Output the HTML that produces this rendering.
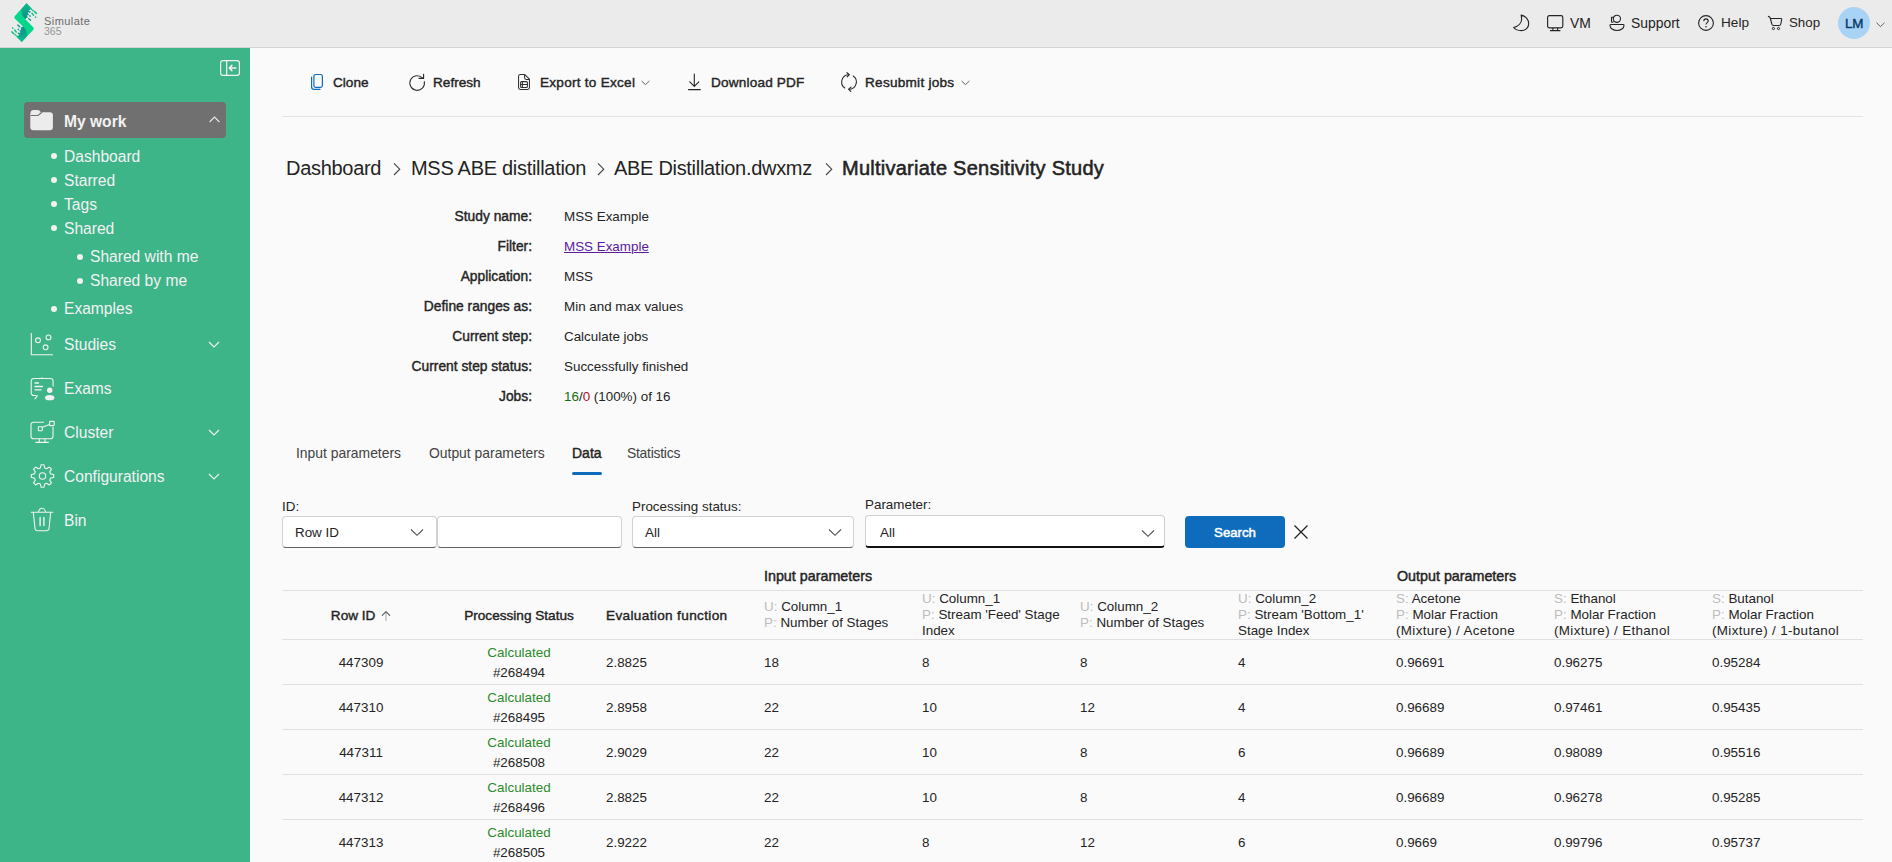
<!DOCTYPE html>
<html><head><meta charset="utf-8">
<style>
*{box-sizing:border-box;margin:0;padding:0}
html,body{width:1892px;height:862px;overflow:hidden;background:#fafafa;font-family:"Liberation Sans",sans-serif;color:#242424}
.a{position:absolute;white-space:nowrap}
svg{position:absolute;overflow:visible}
#hdr{position:absolute;left:0;top:0;width:1892px;height:48px;background:#ebebeb;border-bottom:1px solid #d4d4d4}
#side{position:absolute;left:0;top:48px;width:250px;height:814px;background:#3eb489;color:#f2f2f2}
.ht{font-size:13.4px;line-height:20px;color:#242424}
.nav{font-size:15.6px;line-height:24px;color:#f2f2f2}
.dot{position:absolute;width:6px;height:6px;border-radius:3px;background:#f2f2f2}
.tb{font-size:13.6px;line-height:20px;color:#242424;-webkit-text-stroke:0.4px #242424;margin-top:1px}
.bc{font-size:20px;line-height:28px;color:#242424;letter-spacing:-0.3px}
.lbl{left:332px;width:200px;text-align:right;font-size:13.8px;line-height:20px;color:#242424;-webkit-text-stroke:0.4px #242424}
.val{left:564px;font-size:13.4px;line-height:20px;color:#242424}
.tab{font-size:13.9px;line-height:20px;color:#424242}
.flb{font-size:13.4px;line-height:20px;color:#242424}
.dd{height:32px;background:#fff;border:1px solid #d1d1d1;border-bottom:1px solid #616161;border-radius:4px}
.ddt{font-size:13.4px;line-height:20px;color:#242424}
.gh{font-size:14.3px;line-height:20px;color:#242424;-webkit-text-stroke:0.45px #242424}
.th{font-size:13.6px;line-height:20px;color:#242424;-webkit-text-stroke:0.4px #242424}
.ph{font-size:13.4px;line-height:16px;color:#242424}
.ph i{font-style:normal;color:#bdbdbd}
.td{font-size:13.4px;line-height:20px;color:#242424}
</style></head><body>

<!-- HEADER -->
<div id="hdr"></div>
<svg style="left:0px;top:0px" width="48" height="46" viewBox="0 0 48 46">
  <defs>
    <linearGradient id="lg1" x1="0.2" y1="0" x2="0.3" y2="1"><stop offset="0" stop-color="#0fbf8c"/><stop offset="1" stop-color="#0a8c8a"/></linearGradient>
  </defs>
  <g id="half">
    <path d="M26.5 3 L21 9.3 C20.5 12 21 15.5 23 17.5 L25 19.3 L27 17.5 L28.5 11 L31.5 8.3 Z" fill="url(#lg1)"/>
    <g stroke="#0e9e8a" stroke-width="1.5" stroke-linecap="round">
      <path d="M26.6 10.6 L30 12"/>
      <path d="M25.4 13.6 L28.2 14.4"/>
      <path d="M25.8 16.4 L27 17.3 M28.7 18.7 L30.5 20.3"/>
      <path d="M29.8 15.8 L30.1 16.1"/>
    </g>
    <g stroke="#0cc48c" stroke-width="1.5" stroke-linecap="round">
      <path d="M29.5 7.5 L31.5 9.3"/>
      <path d="M32.6 10.3 L33.2 10.7 M34.6 11.6 L36.4 13.4"/>
      <path d="M32 13.3 L33.6 15.2 M35.5 17.1 L35.7 17.3"/>
    </g>
  </g>
  <use href="#half" transform="rotate(180 24.15 22.65)"/>
  <path d="M21.2 9.1 L14.9 16 Q13.6 17.4 14.9 18.7 L23.6 26.9 C25.8 29 27.3 32.5 27.1 36.2 L33.2 29.9 Q34.4 28.6 33.2 27.3 L24.7 18.4 C22.5 16.3 21 13 21.2 9.1 Z" fill="#05d68a"/>
</svg>
<div class="a" style="left:44px;top:14px;font-size:11px;line-height:14px;color:#6a6a6a;letter-spacing:0.45px">Simulate</div>
<div class="a" style="left:44px;top:25px;font-size:10.5px;line-height:12px;color:#969696">365</div>

<!-- header right -->
<svg style="left:1513px;top:14px" width="17" height="18" viewBox="0 0 17 18"><path d="M8.2 1.1 C12.6 2 15.7 5.6 15.7 9.8 C15.7 13.6 12.5 16.6 8.4 16.6 C5 16.6 2.2 15.4 0.7 13.5 C5.5 12 8.8 8.5 8.6 5 C8.5 3.5 8.4 2.2 8.2 1.1 Z" fill="none" stroke="#242424" stroke-width="1.15" stroke-linejoin="round"/></svg>
<svg style="left:1547px;top:15px" width="17" height="17" viewBox="0 0 17 17"><rect x="0.6" y="0.6" width="15.2" height="12.2" rx="1.8" fill="none" stroke="#242424" stroke-width="1.15"/><path d="M5.9 12.8 V15.3 M10.6 12.8 V15.3 M3 15.6 H13.4" stroke="#242424" stroke-width="1.1"/></svg>
<div class="a ht" style="left:1570px;top:13px;font-size:13.9px">VM</div>
<svg style="left:1609px;top:15px" width="16" height="17" viewBox="0 0 16 17"><circle cx="7.9" cy="3.8" r="3.6" fill="none" stroke="#242424" stroke-width="1.1"/><path d="M4.4 2.3 H2.5 V6.6 C2.5 7.3 3.1 7.5 3.7 7.1 L4.6 6.5" fill="none" stroke="#242424" stroke-width="1.1" stroke-linejoin="round"/><path d="M1.7 9.5 H14.3 C14.8 9.5 15 9.9 15 10.4 C15 13.3 11.8 15.5 8 15.5 C4.2 15.5 1 13.3 1 10.4 C1 9.9 1.2 9.5 1.7 9.5 Z" fill="none" stroke="#242424" stroke-width="1.1"/></svg>
<div class="a ht" style="left:1631px;top:13px;font-size:13.9px">Support</div>
<svg style="left:1698px;top:15px" width="17" height="17" viewBox="0 0 17 17"><circle cx="8" cy="8" r="7.4" fill="none" stroke="#242424" stroke-width="1.1"/><path d="M5.8 6.2 C5.8 4.8 6.8 3.9 8 3.9 C9.2 3.9 10.2 4.8 10.2 6 C10.2 7.5 8 7.7 8 9.6" fill="none" stroke="#242424" stroke-width="1.1"/><circle cx="8" cy="11.8" r="0.8" fill="#242424"/></svg>
<div class="a ht" style="left:1721px;top:13px;font-size:13.6px">Help</div>
<svg style="left:1768px;top:15px" width="16" height="17" viewBox="0 0 16 17"><path d="M0.4 1.4 C1.2 1.4 2 1.9 2.4 3.5" fill="none" stroke="#242424" stroke-width="1.1" stroke-linecap="round"/><path d="M2.4 3.5 H13 C13.5 3.5 13.8 3.9 13.7 4.4 L12.8 9 C12.6 9.9 12 10.5 11.1 10.5 H5.5 C4.6 10.5 4 9.9 3.8 9 Z" fill="none" stroke="#242424" stroke-width="1.1" stroke-linejoin="round"/><circle cx="5.4" cy="13.5" r="1.1" fill="none" stroke="#242424" stroke-width="1"/><circle cx="10.5" cy="13.5" r="1.1" fill="none" stroke="#242424" stroke-width="1"/></svg>
<div class="a ht" style="left:1789px;top:13px;font-size:13.3px">Shop</div>
<div class="a" style="left:1838px;top:7px;width:32px;height:32px;border-radius:16px;background:#a9d3f5"></div>
<div class="a" style="left:1838px;top:14px;width:32px;text-align:center;font-size:13.4px;line-height:20px;color:#0c3b6e;-webkit-text-stroke:0.45px #0c3b6e;letter-spacing:-0.3px">LM</div>
<svg style="left:1876px;top:22px" width="9" height="6" viewBox="0 0 9 6"><path d="M0.5 0.8 L4.5 4.6 L8.5 0.8" fill="none" stroke="#616161" stroke-width="1"/></svg>

<!-- SIDEBAR -->
<div id="side"></div>
<svg style="left:220px;top:60px" width="21" height="17" viewBox="0 0 21 17"><rect x="0.6" y="0.6" width="18.8" height="14.8" rx="2.4" fill="none" stroke="#f2f2f2" stroke-width="1.2"/><path d="M6.7 0.8 V15.2" stroke="#f2f2f2" stroke-width="1.2"/><path d="M15.8 8 H9.6 M11.9 5.4 L9.3 8 L11.9 10.6" fill="none" stroke="#f2f2f2" stroke-width="1.5" stroke-linecap="round" stroke-linejoin="round"/></svg>
<div class="a" style="left:24px;top:102px;width:202px;height:36px;border-radius:4px;background:#707070"></div>
<svg style="left:30px;top:110px" width="24" height="21" viewBox="0 0 24 21"><path d="M0.5 3 C0.5 1.2 1.7 0 3.5 0 H7.5 C8.5 0 9.2 0.4 9.8 1 L11 2.2 L3 5 H0.5 Z" fill="#ececec"/><rect x="0.3" y="2.3" width="22.6" height="18" rx="3" fill="#ececec"/><path d="M0.5 5.5 L8 5.5 L12 2.3" fill="none" stroke="#707070" stroke-width="1.1"/></svg>
<div class="a" style="left:64px;top:110px;font-size:15.6px;line-height:24px;font-weight:bold;color:#f2f2f2">My work</div>
<svg style="left:209px;top:116px" width="11" height="7" viewBox="0 0 11 7"><path d="M0.6 6 L5.5 1 L10.4 6" fill="none" stroke="#e8e8e8" stroke-width="1.1"/></svg>

<div class="dot" style="left:51px;top:153px"></div><div class="a nav" style="left:64px;top:145px">Dashboard</div>
<div class="dot" style="left:51px;top:177px"></div><div class="a nav" style="left:64px;top:169px">Starred</div>
<div class="dot" style="left:51px;top:201px"></div><div class="a nav" style="left:64px;top:193px">Tags</div>
<div class="dot" style="left:51px;top:225px"></div><div class="a nav" style="left:64px;top:217px">Shared</div>
<div class="dot" style="left:77px;top:254px"></div><div class="a nav" style="left:90px;top:245px">Shared with me</div>
<div class="dot" style="left:77px;top:278px"></div><div class="a nav" style="left:90px;top:269px">Shared by me</div>
<div class="dot" style="left:51px;top:306px"></div><div class="a nav" style="left:64px;top:297px">Examples</div>


<svg style="left:30px;top:332px" width="24" height="24" viewBox="0 0 24 24"><path d="M1.3 1 V22.7 H23" fill="none" stroke="#f2f2f2" stroke-width="1.1"/><circle cx="8" cy="8.3" r="2.4" fill="none" stroke="#f2f2f2" stroke-width="1.1"/><circle cx="18.5" cy="5.4" r="2.4" fill="none" stroke="#f2f2f2" stroke-width="1.1"/><circle cx="15.6" cy="15.3" r="2.4" fill="none" stroke="#f2f2f2" stroke-width="1.1"/></svg>
<svg style="left:208px;top:341px" width="12" height="7" viewBox="0 0 12 7"><path d="M1 1 L6 6 L11 1" fill="none" stroke="#f2f2f2" stroke-width="1.1"/></svg>
<svg style="left:30px;top:376px" width="26" height="26" viewBox="0 0 26 26"><path d="M6.5 19.5 H4 C2.3 19.5 1.2 18.4 1.2 16.7 V5.3 C1.2 3.6 2.3 2.5 4 2.5 H20.3 C22 2.5 23.1 3.6 23.1 5.3 V10.5" fill="none" stroke="#f2f2f2" stroke-width="1.1"/><path d="M7.3 19.8 L5 22.8" stroke="#f2f2f2" stroke-width="1.1" stroke-linecap="round"/><path d="M12 1.3 V2.5" stroke="#f2f2f2" stroke-width="1.1"/><path d="M5 7 H8.5 M5 10.5 H12.5 M5 13.8 H11" stroke="#f2f2f2" stroke-width="1.3" stroke-linecap="round"/><circle cx="19.7" cy="14.3" r="2.7" fill="#f2f2f2"/><ellipse cx="19.7" cy="21.7" rx="4.7" ry="2.6" fill="#f2f2f2"/></svg>
<svg style="left:30px;top:420px" width="26" height="24" viewBox="0 0 26 24"><path d="M14 2.3 H3.6 C2 2.3 1 3.3 1 4.9 V16.2 C1 17.8 2 18.8 3.6 18.8 H20.4 C22 18.8 23 17.8 23 16.2 V7" fill="none" stroke="#f2f2f2" stroke-width="1.1"/><path d="M9.3 18.8 V22 M14.9 18.8 V22 M5.3 22.4 H18.8" fill="none" stroke="#f2f2f2" stroke-width="1.1"/><rect x="8.3" y="6.8" width="4" height="4" rx="0.6" fill="none" stroke="#f2f2f2" stroke-width="1.1"/><rect x="19.6" y="1.4" width="4.6" height="4.2" rx="0.6" fill="none" stroke="#f2f2f2" stroke-width="1.1"/><path d="M12.3 7.3 L19.6 4.5" stroke="#f2f2f2" stroke-width="1.1"/></svg>
<svg style="left:208px;top:429px" width="12" height="7" viewBox="0 0 12 7"><path d="M1 1 L6 6 L11 1" fill="none" stroke="#f2f2f2" stroke-width="1.1"/></svg>
<svg style="left:30px;top:463px" width="25" height="26" viewBox="-12.5 -13 25 26"><path d="M-1.50 -11.20 L1.50 -11.20 L2.13 -8.02 L4.17 -7.18 L6.86 -8.98 L8.98 -6.86 L7.18 -4.17 L8.02 -2.13 L11.20 -1.50 L11.20 1.50 L8.02 2.13 L7.18 4.17 L8.98 6.86 L6.86 8.98 L4.17 7.18 L2.13 8.02 L1.50 11.20 L-1.50 11.20 L-2.13 8.02 L-4.17 7.18 L-6.86 8.98 L-8.98 6.86 L-7.18 4.17 L-8.02 2.13 L-11.20 1.50 L-11.20 -1.50 L-8.02 -2.13 L-7.18 -4.17 L-8.98 -6.86 L-6.86 -8.98 L-4.17 -7.18 L-2.13 -8.02 Z" fill="none" stroke="#f2f2f2" stroke-width="1.1" stroke-linejoin="round"/><circle cx="0" cy="0" r="3.2" fill="none" stroke="#f2f2f2" stroke-width="1.1"/></svg>
<svg style="left:208px;top:473px" width="12" height="7" viewBox="0 0 12 7"><path d="M1 1 L6 6 L11 1" fill="none" stroke="#f2f2f2" stroke-width="1.1"/></svg>
<svg style="left:30px;top:507px" width="25" height="25" viewBox="0 0 25 25"><path d="M1.3 5.2 H22.8" stroke="#f2f2f2" stroke-width="1.1" stroke-linecap="round"/><path d="M8.6 5 C8.6 2.9 10.3 1.3 12 1.3 C13.7 1.3 15.4 2.9 15.4 5" fill="none" stroke="#f2f2f2" stroke-width="1.1"/><path d="M3.3 5.3 L5 21.5 C5.2 23 6.3 23.8 7.6 23.8 H16.4 C17.7 23.8 18.8 23 19 21.5 L20.7 5.3" fill="none" stroke="#f2f2f2" stroke-width="1.1"/><path d="M10.1 10.5 V18.5 M13.9 10.5 V18.5" stroke="#f2f2f2" stroke-width="1.4" stroke-linecap="round"/></svg>
<div class="a nav" style="left:64px;top:333px">Studies</div>
<div class="a nav" style="left:64px;top:377px">Exams</div>
<div class="a nav" style="left:64px;top:421px">Cluster</div>
<div class="a nav" style="left:64px;top:465px">Configurations</div>
<div class="a nav" style="left:64px;top:509px">Bin</div>


<!-- TOOLBAR -->
<svg style="left:310px;top:73px" width="15" height="18" viewBox="0 0 15 18"><rect x="3.9" y="1.5" width="8.5" height="12.9" rx="1.8" fill="none" stroke="#0f6cbd" stroke-width="1.2"/><path d="M1.6 4 V14 C1.6 15.5 2.6 16.4 4 16.4 H10" fill="none" stroke="#0f6cbd" stroke-width="1.2" stroke-linecap="round"/></svg>
<div class="a tb" style="left:333px;top:72px">Clone</div>
<svg style="left:408px;top:73px" width="18" height="18" viewBox="0 0 18 18"><path d="M14.6 5.2 A7.3 7.3 0 1 0 16.3 8.6" fill="none" stroke="#303030" stroke-width="1.05" stroke-linecap="round"/><path d="M15.6 1.2 V5.4 H11" fill="none" stroke="#242424" stroke-width="1.1" stroke-linecap="round" stroke-linejoin="round"/></svg>
<div class="a tb" style="left:433px;top:72px">Refresh</div>
<svg style="left:517px;top:73px" width="15" height="18" viewBox="0 0 15 18"><path d="M3.4 1.55 H7.8 L12.45 6.2 V14.6 C12.45 15.7 11.7 16.45 10.6 16.45 H3.4 C2.3 16.45 1.55 15.7 1.55 14.6 V3.4 C1.55 2.3 2.3 1.55 3.4 1.55 Z" fill="none" stroke="#303030" stroke-width="1.05" stroke-linejoin="round"/><path d="M7.6 1.7 V4.8 C7.6 5.8 8.2 6.4 9.2 6.4 H12.3" fill="none" stroke="#303030" stroke-width="1.05"/><rect x="3.6" y="8.6" width="6.8" height="5.8" rx="1" fill="none" stroke="#303030" stroke-width="1.05"/><path d="M3.6 11.5 H10.4 M5.4 8.6 V14.4" stroke="#303030" stroke-width="1.05"/></svg>
<div class="a tb" style="left:540px;top:72px;letter-spacing:0.25px">Export to Excel</div>
<svg style="left:641px;top:80px" width="9" height="6" viewBox="0 0 9 6"><path d="M0.6 1 L4.5 4.6 L8.4 1" fill="none" stroke="#616161" stroke-width="1"/></svg>
<svg style="left:687px;top:73px" width="15" height="18" viewBox="0 0 15 18"><path d="M7.3 1 V13.3 M2.8 8.8 L7.3 13.3 L11.8 8.8" fill="none" stroke="#242424" stroke-width="1.1" stroke-linecap="round" stroke-linejoin="round"/><path d="M1.5 16.6 H13.3" stroke="#242424" stroke-width="1.2" stroke-linecap="round"/></svg>
<div class="a tb" style="left:711px;top:72px;letter-spacing:0.18px">Download PDF</div>
<svg style="left:840px;top:73px" width="18" height="18" viewBox="0 0 18 18"><path d="M4.8 15 A7.3 7.3 0 0 1 9 1.7" fill="none" stroke="#303030" stroke-width="1.1" stroke-linecap="round"/><path d="M13.2 3 A7.3 7.3 0 0 1 9 16.3" fill="none" stroke="#303030" stroke-width="1.1" stroke-linecap="round"/><path d="M7 -0.3 L9.3 1.7 L7.2 3.9" fill="none" stroke="#303030" stroke-width="1.2" stroke-linecap="round" stroke-linejoin="round"/><path d="M11 14.1 L8.7 16.3 L10.8 18.4" fill="none" stroke="#303030" stroke-width="1.2" stroke-linecap="round" stroke-linejoin="round"/></svg>
<div class="a tb" style="left:865px;top:72px;letter-spacing:0.25px">Resubmit jobs</div>
<svg style="left:961px;top:80px" width="9" height="6" viewBox="0 0 9 6"><path d="M0.6 1 L4.5 4.6 L8.4 1" fill="none" stroke="#616161" stroke-width="1"/></svg>
<div class="a" style="left:282px;top:116px;width:1581px;height:1px;background:#e3e3e3"></div>

<!-- BREADCRUMB -->
<div class="a bc" style="left:286px;top:154px">Dashboard</div>
<svg style="left:393px;top:162px" width="9" height="15" viewBox="0 0 9 15"><path d="M1 1.4 L6.7 7.2 L1 13" fill="none" stroke="#444" stroke-width="1.15"/></svg>
<div class="a bc" style="left:411px;top:154px">MSS ABE distillation</div>
<svg style="left:597px;top:162px" width="9" height="15" viewBox="0 0 9 15"><path d="M1 1.4 L6.7 7.2 L1 13" fill="none" stroke="#444" stroke-width="1.15"/></svg>
<div class="a bc" style="left:614px;top:154px">ABE Distillation.dwxmz</div>
<svg style="left:825px;top:162px" width="9" height="15" viewBox="0 0 9 15"><path d="M1 1.4 L6.7 7.2 L1 13" fill="none" stroke="#444" stroke-width="1.15"/></svg>
<div class="a bc" style="left:842px;top:154px;letter-spacing:0.25px;-webkit-text-stroke:0.55px #242424">Multivariate Sensitivity Study</div>

<!-- INFO -->
<div class="a lbl" style="top:207px">Study name:</div><div class="a val" style="top:207px">MSS Example</div>
<div class="a lbl" style="top:237px">Filter:</div><div class="a val" style="top:237px;color:#5a1a9a;text-decoration:underline">MSS Example</div>
<div class="a lbl" style="top:267px">Application:</div><div class="a val" style="top:267px">MSS</div>
<div class="a lbl" style="top:297px">Define ranges as:</div><div class="a val" style="top:297px">Min and max values</div>
<div class="a lbl" style="top:327px">Current step:</div><div class="a val" style="top:327px">Calculate jobs</div>
<div class="a lbl" style="top:357px">Current step status:</div><div class="a val" style="top:357px">Successfully finished</div>
<div class="a lbl" style="top:387px">Jobs:</div><div class="a val" style="top:387px"><span style="color:#0f6e0f">16</span>/<span style="color:#b3101e">0</span> (100%) of 16</div>

<!-- TABS -->
<div class="a tab" style="left:296px;top:443px">Input parameters</div>
<div class="a tab" style="left:429px;top:443px">Output parameters</div>
<div class="a tab" style="left:572px;top:443px;font-size:14px;color:#242424;-webkit-text-stroke:0.4px #242424">Data</div>
<div class="a tab" style="left:627px;top:443px;letter-spacing:-0.25px">Statistics</div>
<div class="a" style="left:572px;top:472px;width:30px;height:3px;border-radius:1.5px;background:#0f6cbd"></div>

<!-- FILTERS -->
<div class="a flb" style="left:282px;top:497px">ID:</div>
<div class="a flb" style="left:632px;top:497px">Processing status:</div>
<div class="a flb" style="left:865px;top:495px">Parameter:</div>
<div class="a dd" style="left:282px;top:516px;width:155px"></div>
<div class="a ddt" style="left:295px;top:523px">Row ID</div>
<svg style="left:410px;top:528px" width="14" height="9" viewBox="0 0 14 9"><path d="M1 1.5 L7 7.3 L13 1.5" fill="none" stroke="#505050" stroke-width="1.05"/></svg>
<div class="a dd" style="left:437px;top:516px;width:185px"></div>
<div class="a dd" style="left:632px;top:516px;width:222px"></div>
<div class="a ddt" style="left:645px;top:523px">All</div>
<svg style="left:828px;top:528px" width="14" height="9" viewBox="0 0 14 9"><path d="M1 1.5 L7 7.3 L13 1.5" fill="none" stroke="#505050" stroke-width="1.05"/></svg>
<div class="a dd" style="left:865px;top:515px;width:300px;height:33px;border-bottom:2px solid #111"></div>
<div class="a ddt" style="left:880px;top:523px">All</div>
<svg style="left:1141px;top:529px" width="14" height="9" viewBox="0 0 14 9"><path d="M1 1.5 L7 7.3 L13 1.5" fill="none" stroke="#505050" stroke-width="1.05"/></svg>
<div class="a" style="left:1185px;top:516px;width:100px;height:32px;border-radius:4px;background:#0f6cbd"></div>
<div class="a" style="left:1185px;top:523px;width:100px;text-align:center;font-size:13.2px;line-height:20px;color:#fff;-webkit-text-stroke:0.5px #fff">Search</div>
<svg style="left:1293px;top:524px" width="16" height="16" viewBox="0 0 16 16"><path d="M1.5 1.5 L14.5 14.5 M14.5 1.5 L1.5 14.5" stroke="#242424" stroke-width="1.3"/></svg>

<!-- TABLE -->
<div class="a gh" style="left:764px;top:566px">Input parameters</div>
<div class="a gh" style="left:1397px;top:566px">Output parameters</div>
<div class="a" style="left:282px;top:590px;width:1581px;height:1px;background:#e0e0e0"></div>
<div class="a" style="left:282px;top:639px;width:1581px;height:1px;background:#e0e0e0"></div>
<div class="a" style="left:282px;top:684px;width:1581px;height:1px;background:#e0e0e0"></div>
<div class="a" style="left:282px;top:729px;width:1581px;height:1px;background:#e0e0e0"></div>
<div class="a" style="left:282px;top:774px;width:1581px;height:1px;background:#e0e0e0"></div>
<div class="a" style="left:282px;top:819px;width:1581px;height:1px;background:#e0e0e0"></div>
<div class="a th" style="left:282px;top:606px;width:158px;text-align:center">Row ID <span style="display:inline-block;width:12px"></span></div>
<svg style="left:381px;top:609px" width="10" height="13" viewBox="0 0 10 13"><path d="M5 11.5 V3.2" fill="none" stroke="#b0b0b0" stroke-width="1.1" stroke-linecap="round"/><path d="M1.3 6.4 L5 2.6 L8.7 6.4" fill="none" stroke="#5a5a5a" stroke-width="1.1" stroke-linecap="round" stroke-linejoin="round"/></svg>
<div class="a th" style="left:440px;top:606px;width:158px;text-align:center">Processing Status</div>
<div class="a th" style="left:606px;top:606px;letter-spacing:0.35px">Evaluation function</div>
<div class="a ph" style="left:764px;top:599px"><i>U:</i> Column_1<br><i>P:</i> Number of Stages</div>
<div class="a ph" style="left:922px;top:591px"><i>U:</i> Column_1<br><i>P:</i> Stream 'Feed' Stage<br>Index</div>
<div class="a ph" style="left:1080px;top:599px"><i>U:</i> Column_2<br><i>P:</i> Number of Stages</div>
<div class="a ph" style="left:1238px;top:591px"><i>U:</i> Column_2<br><i>P:</i> Stream 'Bottom_1'<br>Stage Index</div>
<div class="a ph" style="left:1396px;top:591px"><i>S:</i> Acetone<br><i>P:</i> Molar Fraction<br><span style="letter-spacing:0.35px">(Mixture) / Acetone</span></div>
<div class="a ph" style="left:1554px;top:591px"><i>S:</i> Ethanol<br><i>P:</i> Molar Fraction<br><span style="letter-spacing:0.35px">(Mixture) / Ethanol</span></div>
<div class="a ph" style="left:1712px;top:591px"><i>S:</i> Butanol<br><i>P:</i> Molar Fraction<br><span style="letter-spacing:0.35px">(Mixture) / 1-butanol</span></div>
<div class="a td" style="left:282px;top:653px;width:158px;text-align:center">447309</div>
<div class="a td" style="left:440px;top:643px;width:158px;text-align:center"><span style="color:#2b8a2b">Calculated</span><br>#268494</div>
<div class="a td" style="left:606px;top:653px">2.8825</div>
<div class="a td" style="left:764px;top:653px">18</div>
<div class="a td" style="left:922px;top:653px">8</div>
<div class="a td" style="left:1080px;top:653px">8</div>
<div class="a td" style="left:1238px;top:653px">4</div>
<div class="a td" style="left:1396px;top:653px">0.96691</div>
<div class="a td" style="left:1554px;top:653px">0.96275</div>
<div class="a td" style="left:1712px;top:653px">0.95284</div>
<div class="a td" style="left:282px;top:698px;width:158px;text-align:center">447310</div>
<div class="a td" style="left:440px;top:688px;width:158px;text-align:center"><span style="color:#2b8a2b">Calculated</span><br>#268495</div>
<div class="a td" style="left:606px;top:698px">2.8958</div>
<div class="a td" style="left:764px;top:698px">22</div>
<div class="a td" style="left:922px;top:698px">10</div>
<div class="a td" style="left:1080px;top:698px">12</div>
<div class="a td" style="left:1238px;top:698px">4</div>
<div class="a td" style="left:1396px;top:698px">0.96689</div>
<div class="a td" style="left:1554px;top:698px">0.97461</div>
<div class="a td" style="left:1712px;top:698px">0.95435</div>
<div class="a td" style="left:282px;top:743px;width:158px;text-align:center">447311</div>
<div class="a td" style="left:440px;top:733px;width:158px;text-align:center"><span style="color:#2b8a2b">Calculated</span><br>#268508</div>
<div class="a td" style="left:606px;top:743px">2.9029</div>
<div class="a td" style="left:764px;top:743px">22</div>
<div class="a td" style="left:922px;top:743px">10</div>
<div class="a td" style="left:1080px;top:743px">8</div>
<div class="a td" style="left:1238px;top:743px">6</div>
<div class="a td" style="left:1396px;top:743px">0.96689</div>
<div class="a td" style="left:1554px;top:743px">0.98089</div>
<div class="a td" style="left:1712px;top:743px">0.95516</div>
<div class="a td" style="left:282px;top:788px;width:158px;text-align:center">447312</div>
<div class="a td" style="left:440px;top:778px;width:158px;text-align:center"><span style="color:#2b8a2b">Calculated</span><br>#268496</div>
<div class="a td" style="left:606px;top:788px">2.8825</div>
<div class="a td" style="left:764px;top:788px">22</div>
<div class="a td" style="left:922px;top:788px">10</div>
<div class="a td" style="left:1080px;top:788px">8</div>
<div class="a td" style="left:1238px;top:788px">4</div>
<div class="a td" style="left:1396px;top:788px">0.96689</div>
<div class="a td" style="left:1554px;top:788px">0.96278</div>
<div class="a td" style="left:1712px;top:788px">0.95285</div>
<div class="a td" style="left:282px;top:833px;width:158px;text-align:center">447313</div>
<div class="a td" style="left:440px;top:823px;width:158px;text-align:center"><span style="color:#2b8a2b">Calculated</span><br>#268505</div>
<div class="a td" style="left:606px;top:833px">2.9222</div>
<div class="a td" style="left:764px;top:833px">22</div>
<div class="a td" style="left:922px;top:833px">8</div>
<div class="a td" style="left:1080px;top:833px">12</div>
<div class="a td" style="left:1238px;top:833px">6</div>
<div class="a td" style="left:1396px;top:833px">0.9669</div>
<div class="a td" style="left:1554px;top:833px">0.99796</div>
<div class="a td" style="left:1712px;top:833px">0.95737</div>

</body></html>
